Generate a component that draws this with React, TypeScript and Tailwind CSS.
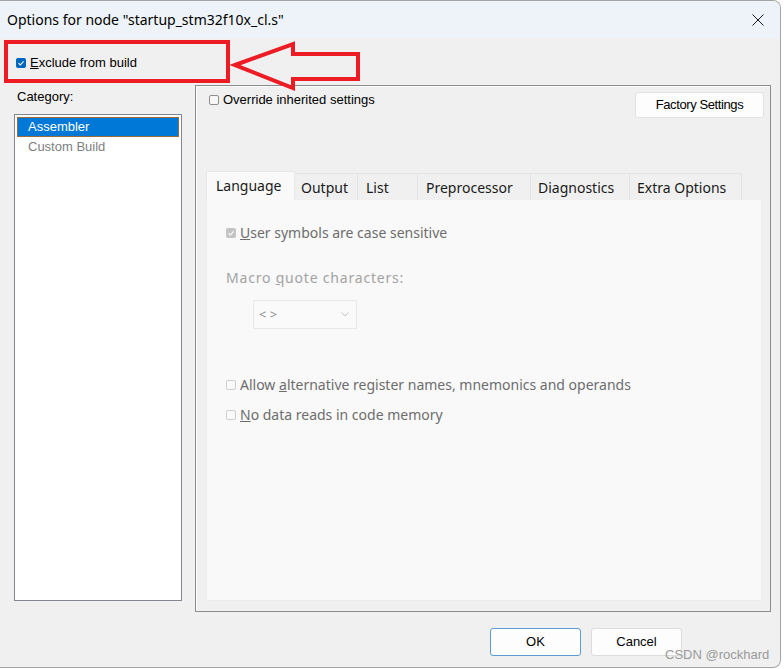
import React from 'react';

const dlg = "font-['Liberation_Sans',Arial,sans-serif] text-[13px]";
const ui = "font-['Noto_Sans',sans-serif] text-[14px]";

const TABS = [
  { label: 'Language', w: 'w-[89px]', pl: 'pl-[9px]' },
  { label: 'Output', w: 'w-[63px]', pl: 'pl-[6px]' },
  { label: 'List', w: 'w-[60px]', pl: 'pl-[8px]' },
  { label: 'Preprocessor', w: 'w-[113px]', pl: 'pl-[8px]' },
  { label: 'Diagnostics', w: 'w-[99px]', pl: 'pl-[7px]' },
  { label: 'Extra Options', w: 'w-[112px]', pl: 'pl-[7px]' },
];

function CheckMark({ color }: { color: string }) {
  return (
    <svg viewBox="0 0 10 10" className="w-[10px] h-[10px]">
      <path d="M2.5 5.2 L4.3 7 L7.6 3.3" fill="none" stroke={color} strokeWidth="1.1" />
    </svg>
  );
}

function GrayBox({ checked }: { checked?: boolean }) {
  if (checked) {
    return (
      <div className="w-[10px] h-[10px] rounded-[2px] bg-[#c4c4c4] shrink-0">
        <CheckMark color="#ffffff" />
      </div>
    );
  }
  return <div className="w-[10px] h-[10px] rounded-[2px] border border-[#cfcfcf] bg-[#f9f9f9] shrink-0" />;
}

export default function App() {
  return (
    <div className="relative w-[784px] h-[669px] bg-white overflow-hidden">
      <div className="w-[781px] h-[668px] bg-[#f0f0f0] border-t border-r border-b border-[#a3a3a3] rounded-tr-[8px] rounded-br-[8px] overflow-hidden flex flex-col">
        {/* title bar */}
        <div className="h-[37px] bg-[#eef3f9] flex items-center justify-between pl-[7px] pr-[16px] shrink-0">
          <span className={`${ui} text-black leading-[20px]`}>Options for node "startup_stm32f10x_cl.s"</span>
          <svg viewBox="0 0 12 12" className="w-[12px] h-[12px]">
            <path d="M0.5 0.5 L11.5 11.5 M11.5 0.5 L0.5 11.5" stroke="#1a1a1a" strokeWidth="1" />
          </svg>
        </div>

        {/* exclude row */}
        <div className="h-[47px] flex items-center pt-[3px] pl-[16px] shrink-0">
          <div className="w-[10px] h-[10px] rounded-[2px] bg-[#0067c0]">
            <CheckMark color="#ffffff" />
          </div>
          <span className={`${dlg} text-black ml-[4px] leading-[16px]`}>
            <span className="underline">E</span>xclude from build
          </span>
        </div>

        {/* main row */}
        <div className="h-[527px] flex shrink-0">
          <div className="ml-[14px] w-[168px] flex flex-col">
            <div className={`${dlg} text-black h-[29px] pt-[4px] pl-[3px] leading-[16px]`}>Category:</div>
            <div className="h-[487px] bg-white border border-[#828790] p-[2px]">
              <div className={`${dlg} h-[20px] bg-[#0078d7] border border-[#9b6a3b] text-white pl-[10px] leading-[18px]`}>
                Assembler
              </div>
              <div className={`${dlg} h-[20px] text-[#808080] pl-[11px] leading-[20px]`}>Custom Build</div>
            </div>
          </div>

          <div className="ml-[13px] w-[576px] h-[527px] border border-[#8c8c8c] shadow-[inset_1px_1px_0_#ffffff] flex flex-col">
            <div className="h-[85px] flex justify-between items-start shrink-0">
              <div className="mt-[8px] ml-[13px] h-[12px] flex items-center">
                <div className="w-[10px] h-[10px] rounded-[2px] border border-[#8f8f8f] bg-[#f7f7f7]" />
                <span className={`${dlg} text-black ml-[4px] leading-[16px]`}>Override inherited settings</span>
              </div>
              <button className={`${dlg} tracking-[-0.4px] mt-[6px] mr-[6px] w-[129px] h-[26px] rounded-[3px] bg-[#fdfdfd] border border-[#e2e2e2] text-black`}>
                Factory Settings
              </button>
            </div>

            <div className="ml-[10px] w-[556px] flex flex-col">
              <div className="h-[29px] flex items-end">
                {TABS.map((t, i) => (
                  <div
                    key={t.label}
                    className={`${ui} ${t.w} ${t.pl} text-[#1a1a1a] ${
                      i === 0
                        ? 'h-[29px] bg-[#f9f9f9] border-t border-l border-r border-[#e8e8e8] leading-[27px]'
                        : 'h-[27px] bg-[#f0f0f0] border-t border-r border-[#e4e4e4] leading-[27px]'
                    }`}
                  >
                    {t.label}
                  </div>
                ))}
              </div>
              <div className={`${ui} h-[401px] bg-[#f9f9f9] border-l border-r border-b border-[#ececec] flex flex-col`}>
                <div className="mt-[24px] h-[18px] pl-[19px] flex items-center gap-[4px] text-[#6d6d6d]">
                  <GrayBox checked />
                  <span className="leading-[18px]">
                    <span className="underline">U</span>ser symbols are case sensitive
                  </span>
                </div>
                <div className="mt-[27px] h-[18px] pl-[19px] text-[#a3a3a3] tracking-[0.8px] leading-[18px]">
                  Macro <span className="underline">q</span>uote characters:
                </div>
                <div className="mt-[13px] ml-[46px] w-[104px] h-[29px] border border-[#e8e8e8] bg-[#fafafa] flex items-center justify-between pl-[5px] pr-[7px]">
                  <span className="text-[#8a8a8a] text-[13px]">&lt; &gt;</span>
                  <svg viewBox="0 0 8 5" className="w-[8px] h-[5px]">
                    <path d="M0.5 0.5 L4 4 L7.5 0.5" fill="none" stroke="#c4c4c4" strokeWidth="1" />
                  </svg>
                </div>
                <div className="mt-[47px] h-[18px] pl-[19px] flex items-center gap-[4px] text-[#6d6d6d]">
                  <GrayBox />
                  <span className="leading-[18px]">
                    Allow <span className="underline">a</span>lternative register names, mnemonics and operands
                  </span>
                </div>
                <div className="mt-[12px] h-[18px] pl-[19px] flex items-center gap-[4px] text-[#6d6d6d]">
                  <GrayBox />
                  <span className="leading-[18px]">
                    <span className="underline">N</span>o data reads in code memory
                  </span>
                </div>
              </div>
            </div>
          </div>
        </div>

        {/* buttons */}
        <div className="flex-1 flex justify-end items-start pt-[16px] pr-[98px] gap-[10px]">
          <button className={`${dlg} w-[91px] h-[28px] rounded-[3px] bg-[#fdfdfd] border border-[#5b9bd8] text-black`}>OK</button>
          <button className={`${dlg} w-[91px] h-[28px] rounded-[3px] bg-[#fdfdfd] border border-[#dcdcdc] text-black`}>Cancel</button>
        </div>
      </div>

      {/* annotation: red box + arrow */}
      <div className="absolute left-[4px] top-[40px] w-[226px] h-[43px] border-4 border-[#ed1c24]" />
      <svg className="absolute left-[228px] top-[38px]" width="134" height="54" viewBox="0 0 134 54">
        <polygon
          points="7,27 65,6 65,16 130,16 130,41 65,41 65,50"
          fill="none"
          stroke="#ed1c24"
          strokeWidth="4"
          strokeLinejoin="miter"
        />
      </svg>

      {/* watermark */}
      <div className={`${dlg} absolute left-[665px] top-[646px] leading-[18px] text-[#9a9a9a]`}>CSDN @rockhard</div>
    </div>
  );
}
